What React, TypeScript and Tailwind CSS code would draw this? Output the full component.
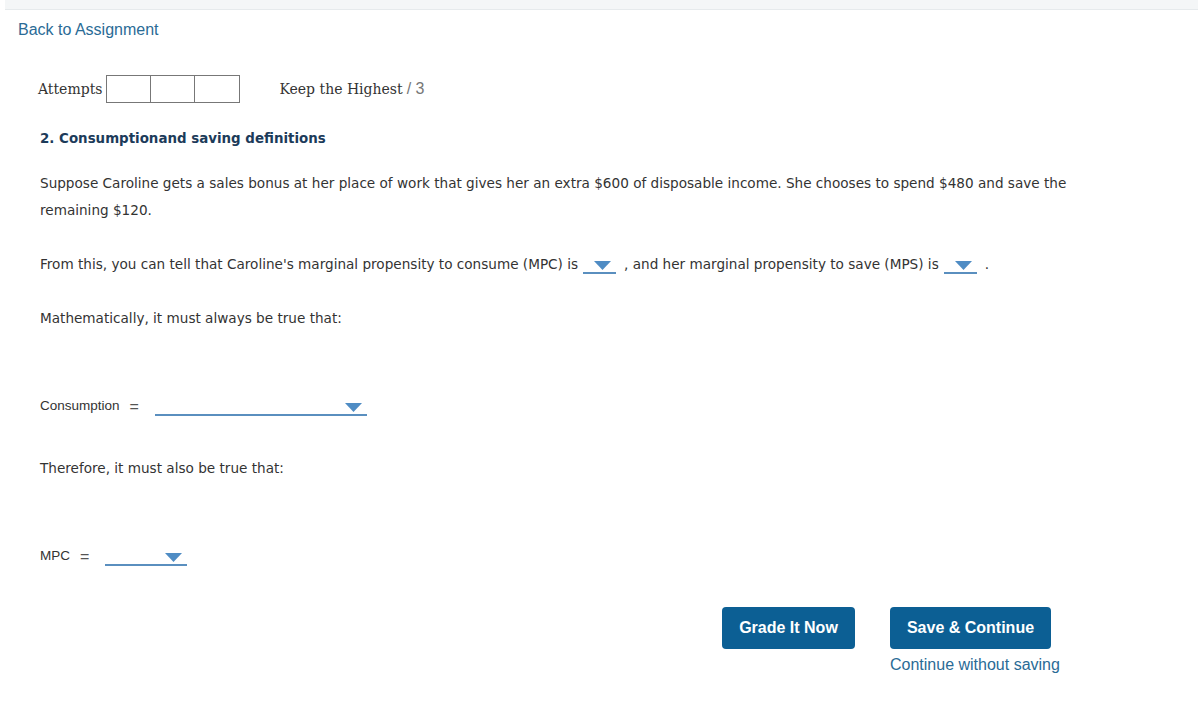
import React from "react";

const Drop = ({ w, className = "" }: { w: number; className?: string }) => (
  <span
    className={`relative inline-block align-middle border-b-2 border-[#5a8fbf] h-[18px] ${className}`}
    style={{ width: w }}
  >
    <svg className="absolute right-[5px] top-[5px]" width="17" height="9" viewBox="0 0 17 9">
      <path d="M0 0 L17 0 L8.5 9 Z" fill="#4f8cc4" />
    </svg>
  </span>
);

export default function App() {
  const verdana = { fontFamily: '"DejaVu Sans", Verdana, sans-serif' };
  return (
    <div className="w-[1198px] h-[712px] bg-white relative overflow-hidden" style={{ fontFamily: '"Liberation Sans", Arial, sans-serif' }}>
      <div className="ml-[5px] h-[10px] bg-[#f4f6f7] border-b border-[#e6eaec]" />
      <div className="pl-[18px] pt-[10px] text-[16px] leading-[20px] text-[#2a6b96]">Back to Assignment</div>

      <div className="flex items-center mt-[35px] pl-[38px] h-[28px]">
        <span className="text-[14px] text-[#333]" style={{ fontFamily: '"DejaVu Serif", Georgia, serif', fontWeight: 500 }}>
          Attempts
        </span>
        <div className="flex ml-[4px] border border-[#777] h-[28px]">
          <div className="w-[44px] border-r border-[#777]" />
          <div className="w-[44px] border-r border-[#777]" />
          <div className="w-[44px]" />
        </div>
        <span className="ml-[39px] text-[14px] text-[#333]" style={{ fontFamily: '"DejaVu Serif", Georgia, serif', fontWeight: 500 }}>
          Keep the Highest
        </span>
        <span className="ml-[4px] text-[16px] text-[#777]">/ 3</span>
      </div>

      <div className="pl-[40px]" style={verdana}>
        <div className="mt-[26px] text-[13.4px] font-bold text-[#1c3b5a] leading-[20px]">2. Consumptionand saving definitions</div>

        <p className="mt-[21px] text-[13.6px] leading-[27px] text-[#333] w-[1060px]">
          Suppose Caroline gets a sales bonus at her place of work that gives her an extra $600 of disposable income. She chooses to spend $480 and save the remaining $120.
        </p>

        <p className="mt-[27px] text-[13.6px] leading-[27px] text-[#333] flex items-center">
          <span>From this, you can tell that Caroline's marginal propensity to consume (MPC) is</span>
          <Drop w={33} className="ml-[5px]" />
          <span className="ml-[8px]">, and her marginal propensity to save (MPS) is</span>
          <Drop w={33} className="ml-[5px]" />
          <span className="ml-[8px]">.</span>
        </p>

        <p className="mt-[27px] text-[13.6px] leading-[27px] text-[#333]">Mathematically, it must always be true that:</p>

        <div className="mt-[61px] flex items-center h-[27px] text-[#333]" style={{ fontFamily: '"Liberation Sans", Arial, sans-serif' }}>
          <span className="text-[13.5px]">Consumption</span>
          <span className="ml-[10px] text-[16px] text-[#555]">=</span>
          <Drop w={212} className="ml-[16px]" />
        </div>

        <p className="mt-[35px] text-[13.6px] leading-[27px] text-[#333]">Therefore, it must also be true that:</p>

        <div className="mt-[61px] flex items-center h-[27px] text-[#333]" style={{ fontFamily: '"Liberation Sans", Arial, sans-serif' }}>
          <span className="text-[13.5px]">MPC</span>
          <span className="ml-[10px] text-[16px] text-[#555]">=</span>
          <Drop w={82} className="ml-[16px]" />
        </div>
      </div>

      <div className="flex mt-[37px] pl-[722px]">
        <button className="w-[133px] h-[42px] rounded-[4px] bg-[#0c5f94] text-white text-[16px] font-bold">Grade It Now</button>
        <div className="ml-[35px] flex flex-col items-start">
          <button className="w-[161px] h-[42px] rounded-[4px] bg-[#0c5f94] text-white text-[16px] font-bold">Save &amp; Continue</button>
          <span className="mt-[6px] text-[16px] leading-[20px] text-[#2a6b96]">Continue without saving</span>
        </div>
      </div>
    </div>
  );
}
